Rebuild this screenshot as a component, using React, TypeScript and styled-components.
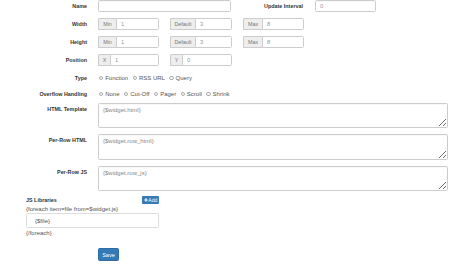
import * as React from 'react'
import styled, { createGlobalStyle } from 'styled-components'

const GlobalStyle = createGlobalStyle`
  body {
    margin: 0;
    background: #fff;
    font-family: "Liberation Sans", Arial, sans-serif;
    font-size: 5.4px;
    color: #333;
  }
  * { box-sizing: border-box; }
`

const Form = styled.form`
  width: 448px;
  padding-left: 26px;
`

const Row = styled.div<{ $mb?: number }>`
  display: grid;
  grid-template-columns: 61px 1fr;
  column-gap: 11px;
  margin-bottom: ${p => (p.$mb ?? 6)}px;
`

const Label = styled.label<{ $w?: number }>`
  display: block;
  width: ${p => (p.$w ? `${p.$w}px` : 'auto')};
  text-align: right;
  font-weight: bold;
  line-height: 12px;
  white-space: nowrap;
`

const Controls = styled.div`
  display: flex;
  align-items: center;
  gap: 11px;
`

const TextInput = styled.input<{ $w: number }>`
  width: ${p => p.$w}px;
  height: 12px;
  padding: 0 4px;
  border: 1px solid #ccc;
  border-radius: 1.5px;
  font: inherit;
  font-size: 5.8px;
  color: #999;
  box-shadow: inset 0 0.5px 0.5px rgba(0, 0, 0, 0.06);
`

const Group = styled.div<{ $w: number }>`
  display: flex;
  width: ${p => p.$w}px;
  height: 12px;
`

const Addon = styled.span<{ $w: number }>`
  display: flex;
  align-items: center;
  justify-content: center;
  width: ${p => p.$w}px;
  flex: none;
  background: #eee;
  border: 1px solid #ccc;
  border-right: none;
  border-radius: 1.5px 0 0 1.5px;
  color: #777;
`

const GroupInput = styled.input`
  flex: 1;
  min-width: 0;
  height: 12px;
  padding: 0 4px;
  border: 1px solid #ccc;
  border-radius: 0 1.5px 1.5px 0;
  font: inherit;
  font-size: 5.8px;
  color: #999;
`

const RadioList = styled.div`
  display: flex;
  align-items: center;
  height: 12px;
  padding-left: 1px;
  gap: 4.5px;
`

const RadioItem = styled.label`
  display: flex;
  align-items: center;
  gap: 1.8px;
  font-size: 6px;
  color: #555;
`

const RadioDot = styled.span`
  display: inline-block;
  width: 4.4px;
  height: 4.4px;
  border: 0.6px solid #aaa;
  border-radius: 50%;
  background: #fff;
`

const TextArea = styled.textarea<{ $h: number }>`
  display: block;
  width: 350px;
  height: ${p => p.$h}px;
  padding: 3px 4px;
  border: 1px solid #ccc;
  border-radius: 1.5px;
  font: inherit;
  font-size: 6px;
  color: #888;
  resize: vertical;
  box-shadow: inset 0 0.5px 0.5px rgba(0, 0, 0, 0.06);
`

const Libraries = styled.div`
  width: 133px;
  margin-top: 5px;
`

const LibHeader = styled.div`
  display: flex;
  justify-content: space-between;
  align-items: center;
  height: 8px;
  margin-bottom: 2px;
  font-weight: bold;
`

const AddButton = styled.button`
  display: flex;
  align-items: center;
  gap: 0.8px;
  height: 7.5px;
  padding: 0 1.8px;
  border: none;
  border-radius: 1px;
  background: #337ab7;
  color: #fff;
  font: inherit;
  font-size: 5px;
  font-weight: normal;
`

const CodeLine = styled.div`
  line-height: 7px;
  font-size: 6px;
  color: #555;
`

const LibBox = styled.div`
  height: 15px;
  margin: 0 0 2px;
  padding-left: 8px;
  display: flex;
  align-items: center;
  border: 1px solid #ddd;
  border-radius: 1.5px;
  font-size: 6px;
  color: #555;
`

const SaveRow = styled.div`
  margin: 11px 0 0 72px;
`

const SaveButton = styled.button`
  width: 21px;
  height: 13px;
  padding: 0;
  border: 1px solid #2e6da4;
  border-radius: 1.5px;
  background: #337ab7;
  color: #fff;
  font: inherit;
  font-size: 5.6px;
`

const Plus = () => (
  <svg width="4" height="4" viewBox="0 0 4 4">
    <path d="M2 0.3v3.4M0.3 2h3.4" stroke="#fff" strokeWidth="1.1" />
  </svg>
)

type Opt = { label: string }

const Radios: React.FC<{ options: Opt[] }> = ({ options }) => (
  <RadioList>
    {options.map(o => (
      <RadioItem key={o.label}>
        <RadioDot />
        {o.label}
      </RadioItem>
    ))}
  </RadioList>
)

const Pair: React.FC<{ addon: string; aw: number; w: number; value: string }> = ({ addon, aw, w, value }) => (
  <Group $w={w}>
    <Addon $w={aw}>{addon}</Addon>
    <GroupInput defaultValue={value} />
  </Group>
)

export default function App() {
  return (
    <>
      <GlobalStyle />
      <Form onSubmit={e => e.preventDefault()}>
        <Row>
          <Label>Name</Label>
          <Controls>
            <TextInput $w={133} />
            <Label $w={61}>Update Interval</Label>
            <TextInput $w={61} defaultValue="0" style={{ marginLeft: 1 }} />
          </Controls>
        </Row>
        <Row>
          <Label>Width</Label>
          <Controls>
            <Pair addon="Min" aw={18} w={61} value="1" />
            <Pair addon="Default" aw={25} w={62} value="3" />
            <Pair addon="Max" aw={19} w={61} value="8" />
          </Controls>
        </Row>
        <Row>
          <Label>Height</Label>
          <Controls>
            <Pair addon="Min" aw={18} w={61} value="1" />
            <Pair addon="Default" aw={25} w={62} value="3" />
            <Pair addon="Max" aw={19} w={61} value="8" />
          </Controls>
        </Row>
        <Row>
          <Label>Position</Label>
          <Controls>
            <Pair addon="X" aw={12} w={61} value="1" />
            <Pair addon="Y" aw={12} w={62} value="0" />
          </Controls>
        </Row>
        <Row $mb={4}>
          <Label>Type</Label>
          <Radios options={[{ label: 'Function' }, { label: 'RSS URL' }, { label: 'Query' }]} />
        </Row>
        <Row $mb={3}>
          <Label>Overflow Handling</Label>
          <Radios
            options={[
              { label: 'None' },
              { label: 'Cut-Off' },
              { label: 'Pager' },
              { label: 'Scroll' },
              { label: 'Shrink' },
            ]}
          />
        </Row>
        <Row>
          <Label>HTML Template</Label>
          <TextArea $h={25} defaultValue="{$widget.html}" />
        </Row>
        <Row>
          <Label>Per-Row HTML</Label>
          <TextArea $h={26} defaultValue="{$widget.row_html}" />
        </Row>
        <Row $mb={0}>
          <Label>Per-Row JS</Label>
          <TextArea $h={25} defaultValue="{$widget.row_js}" />
        </Row>
        <Libraries>
          <LibHeader>
            <span>JS Libraries</span>
            <AddButton type="button">
              <Plus />
              Add
            </AddButton>
          </LibHeader>
          <CodeLine>{'{foreach item=file from=$widget.js}'}</CodeLine>
          <LibBox>{'{$file}'}</LibBox>
          <CodeLine>{'{/foreach}'}</CodeLine>
        </Libraries>
        <SaveRow>
          <SaveButton type="submit">Save</SaveButton>
        </SaveRow>
      </Form>
    </>
  )
}
